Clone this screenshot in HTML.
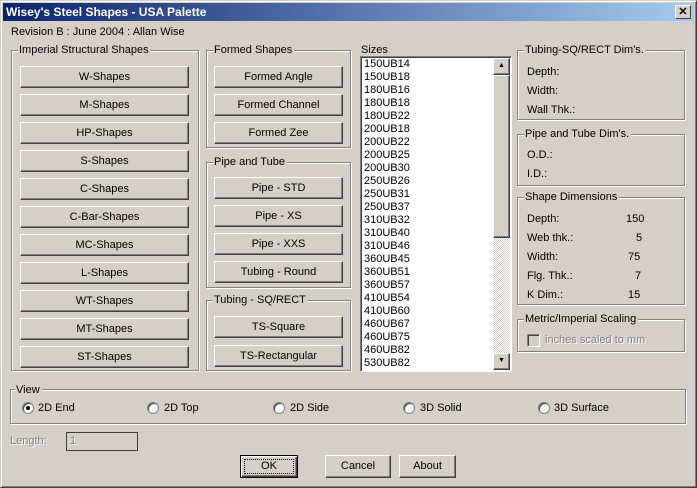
<!DOCTYPE html>
<html><head><style>
*{margin:0;padding:0;box-sizing:border-box}
body{width:697px;height:488px;background:#d4d0c8;font:11px "Liberation Sans",sans-serif;color:#000;position:relative;overflow:hidden}
.a{position:absolute}
#win{position:absolute;left:0;top:0;width:697px;height:488px;border:1px solid;border-color:#d4d0c8 #404040 #404040 #d4d0c8;box-shadow:inset 1px 1px #fff,inset -1px -1px #808080}
#tb{position:absolute;left:3px;top:3px;width:691px;height:18px;background:linear-gradient(90deg,#0a246a,#a6caf0);color:#fff;font-weight:bold;font-size:12px;line-height:18px;padding-left:3px}
#x{position:absolute;right:3px;top:2px;width:16px;height:14px;background:#d4d0c8;border:1px solid;border-color:#fff #404040 #404040 #fff;color:#000;font:bold 11px "Liberation Sans",sans-serif;text-align:center;line-height:12px}
.g{position:absolute;border:1px solid #808080;box-shadow:1px 1px #fff,inset 1px 1px #fff}
.g>span{position:absolute;left:6px;top:-8px;background:#d4d0c8;padding:0 2px 0 1px;line-height:14px;white-space:nowrap}
.b{position:absolute;height:22px;border:1px solid;border-color:#fff #404040 #404040 #fff;box-shadow:inset -1px -1px #808080;text-align:center;line-height:20px;background:#d4d0c8}
.l{position:absolute;white-space:nowrap;line-height:13px}
#lb{position:absolute;left:360px;top:56px;width:152px;height:316px;background:#fff;border:1px solid;border-color:#808080 #fff #fff #808080;box-shadow:inset 1px 1px #404040}
#lb div.it{height:13px;line-height:13px;padding-left:3px}
.sb{position:absolute;left:493px;width:17px;height:17px;background:#d4d0c8;border:1px solid;border-color:#fff #404040 #404040 #fff;box-shadow:inset -1px -1px #808080;font-size:7px;text-align:center;line-height:14px}
.r{position:absolute;width:12px;height:12px;border-radius:50%;background:#fff;border:1px solid #808080;box-shadow:inset 1px 1px #404040}
.gr{color:#808080;text-shadow:1px 1px #fff}
</style></head><body>
<div id="win"></div>
<div id="tb">Wisey's Steel Shapes - USA Palette<div id="x">✕</div></div>
<div class="l" style="left:11px;top:26px">Revision B : June 2004 : Allan Wise</div>

<div class="g" style="left:11px;top:50px;width:188px;height:321px"><span>Imperial Structural Shapes</span></div>
<div class="b" style="left:20px;top:66px;width:169px">W-Shapes</div>
<div class="b" style="left:20px;top:94px;width:169px">M-Shapes</div>
<div class="b" style="left:20px;top:122px;width:169px">HP-Shapes</div>
<div class="b" style="left:20px;top:150px;width:169px">S-Shapes</div>
<div class="b" style="left:20px;top:178px;width:169px">C-Shapes</div>
<div class="b" style="left:20px;top:206px;width:169px">C-Bar-Shapes</div>
<div class="b" style="left:20px;top:234px;width:169px">MC-Shapes</div>
<div class="b" style="left:20px;top:262px;width:169px">L-Shapes</div>
<div class="b" style="left:20px;top:290px;width:169px">WT-Shapes</div>
<div class="b" style="left:20px;top:318px;width:169px">MT-Shapes</div>
<div class="b" style="left:20px;top:346px;width:169px">ST-Shapes</div>

<div class="g" style="left:206px;top:50px;width:145px;height:98px"><span>Formed Shapes</span></div>
<div class="b" style="left:214px;top:66px;width:129px">Formed Angle</div>
<div class="b" style="left:214px;top:94px;width:129px">Formed Channel</div>
<div class="b" style="left:214px;top:122px;width:129px">Formed Zee</div>

<div class="g" style="left:206px;top:162px;width:145px;height:126px"><span>Pipe and Tube</span></div>
<div class="b" style="left:214px;top:177px;width:129px">Pipe - STD</div>
<div class="b" style="left:214px;top:205px;width:129px">Pipe - XS</div>
<div class="b" style="left:214px;top:233px;width:129px">Pipe - XXS</div>
<div class="b" style="left:214px;top:261px;width:129px">Tubing - Round</div>

<div class="g" style="left:206px;top:300px;width:145px;height:71px"><span>Tubing - SQ/RECT</span></div>
<div class="b" style="left:214px;top:316px;width:129px">TS-Square</div>
<div class="b" style="left:214px;top:345px;width:129px">TS-Rectangular</div>

<div class="l" style="left:361px;top:44px">Sizes</div>
<div id="lb"><div style="padding-top:1px">
<div class="it">150UB14</div><div class="it">150UB18</div><div class="it">180UB16</div><div class="it">180UB18</div><div class="it">180UB22</div><div class="it">200UB18</div><div class="it">200UB22</div><div class="it">200UB25</div><div class="it">200UB30</div><div class="it">250UB26</div><div class="it">250UB31</div><div class="it">250UB37</div><div class="it">310UB32</div><div class="it">310UB40</div><div class="it">310UB46</div><div class="it">360UB45</div><div class="it">360UB51</div><div class="it">360UB57</div><div class="it">410UB54</div><div class="it">410UB60</div><div class="it">460UB67</div><div class="it">460UB75</div><div class="it">460UB82</div><div class="it">530UB82</div>
</div></div>
<div class="a" style="left:493px;top:58px;width:17px;height:312px;background:repeating-conic-gradient(#d4d0c8 0 25%,#fff 0 50%) 0 0/2px 2px"></div>
<div class="sb" style="top:58px">▲</div>
<div class="sb" style="top:75px;height:163px"></div>
<div class="sb" style="top:353px">▼</div>

<div class="g" style="left:517px;top:50px;width:168px;height:70px"><span>Tubing-SQ/RECT Dim's.</span></div>
<div class="l" style="left:527px;top:66px">Depth:</div>
<div class="l" style="left:527px;top:85px">Width:</div>
<div class="l" style="left:527px;top:104px">Wall Thk.:</div>

<div class="g" style="left:517px;top:134px;width:168px;height:52px"><span>Pipe and Tube Dim's.</span></div>
<div class="l" style="left:527px;top:149px">O.D.:</div>
<div class="l" style="left:527px;top:168px">I.D.:</div>

<div class="g" style="left:517px;top:197px;width:168px;height:108px"><span>Shape Dimensions</span></div>
<div class="l" style="left:527px;top:213px">Depth:</div><div class="l" style="left:626px;top:213px">150</div>
<div class="l" style="left:527px;top:232px">Web thk.:</div><div class="l" style="left:636px;top:232px">5</div>
<div class="l" style="left:527px;top:251px">Width:</div><div class="l" style="left:628px;top:251px">75</div>
<div class="l" style="left:527px;top:270px">Flg. Thk.:</div><div class="l" style="left:635px;top:270px">7</div>
<div class="l" style="left:527px;top:289px">K Dim.:</div><div class="l" style="left:628px;top:289px">15</div>

<div class="g" style="left:517px;top:319px;width:168px;height:33px"><span>Metric/Imperial Scaling</span></div>
<div class="a" style="left:527px;top:334px;width:13px;height:13px;border:1px solid;border-color:#808080 #fff #fff #808080;box-shadow:inset 1px 1px #404040"></div>
<div class="l gr" style="left:545px;top:334px">inches scaled to mm</div>

<div class="g" style="left:10px;top:389px;width:676px;height:35px"><span style="left:4px;top:-7px">View</span></div>
<div class="r" style="left:22px;top:402px"><div class="a" style="left:3px;top:3px;width:4px;height:4px;background:#000;border-radius:50%"></div></div>
<div class="l" style="left:38px;top:402px">2D End</div>
<div class="r" style="left:147px;top:402px"></div><div class="l" style="left:164px;top:402px">2D Top</div>
<div class="r" style="left:273px;top:402px"></div><div class="l" style="left:290px;top:402px">2D Side</div>
<div class="r" style="left:403px;top:402px"></div><div class="l" style="left:420px;top:402px">3D Solid</div>
<div class="r" style="left:538px;top:402px"></div><div class="l" style="left:554px;top:402px">3D Surface</div>

<div class="l gr" style="left:10px;top:435px">Length:</div>
<div class="a gr" style="left:66px;top:432px;width:72px;height:19px;border:1px solid #404040;padding-left:3px;line-height:17px">1</div>

<div class="b" style="left:240px;top:455px;width:58px;height:23px;border:1px solid #000;box-shadow:inset 1px 1px #fff,inset -1px -1px #404040,inset -2px -2px #808080"><div style="margin:3px;border:1px dotted #000;line-height:13px">OK</div></div>
<div class="b" style="left:325px;top:455px;width:66px;height:23px">Cancel</div>
<div class="b" style="left:399px;top:455px;width:57px;height:23px">About</div>
</body></html>
